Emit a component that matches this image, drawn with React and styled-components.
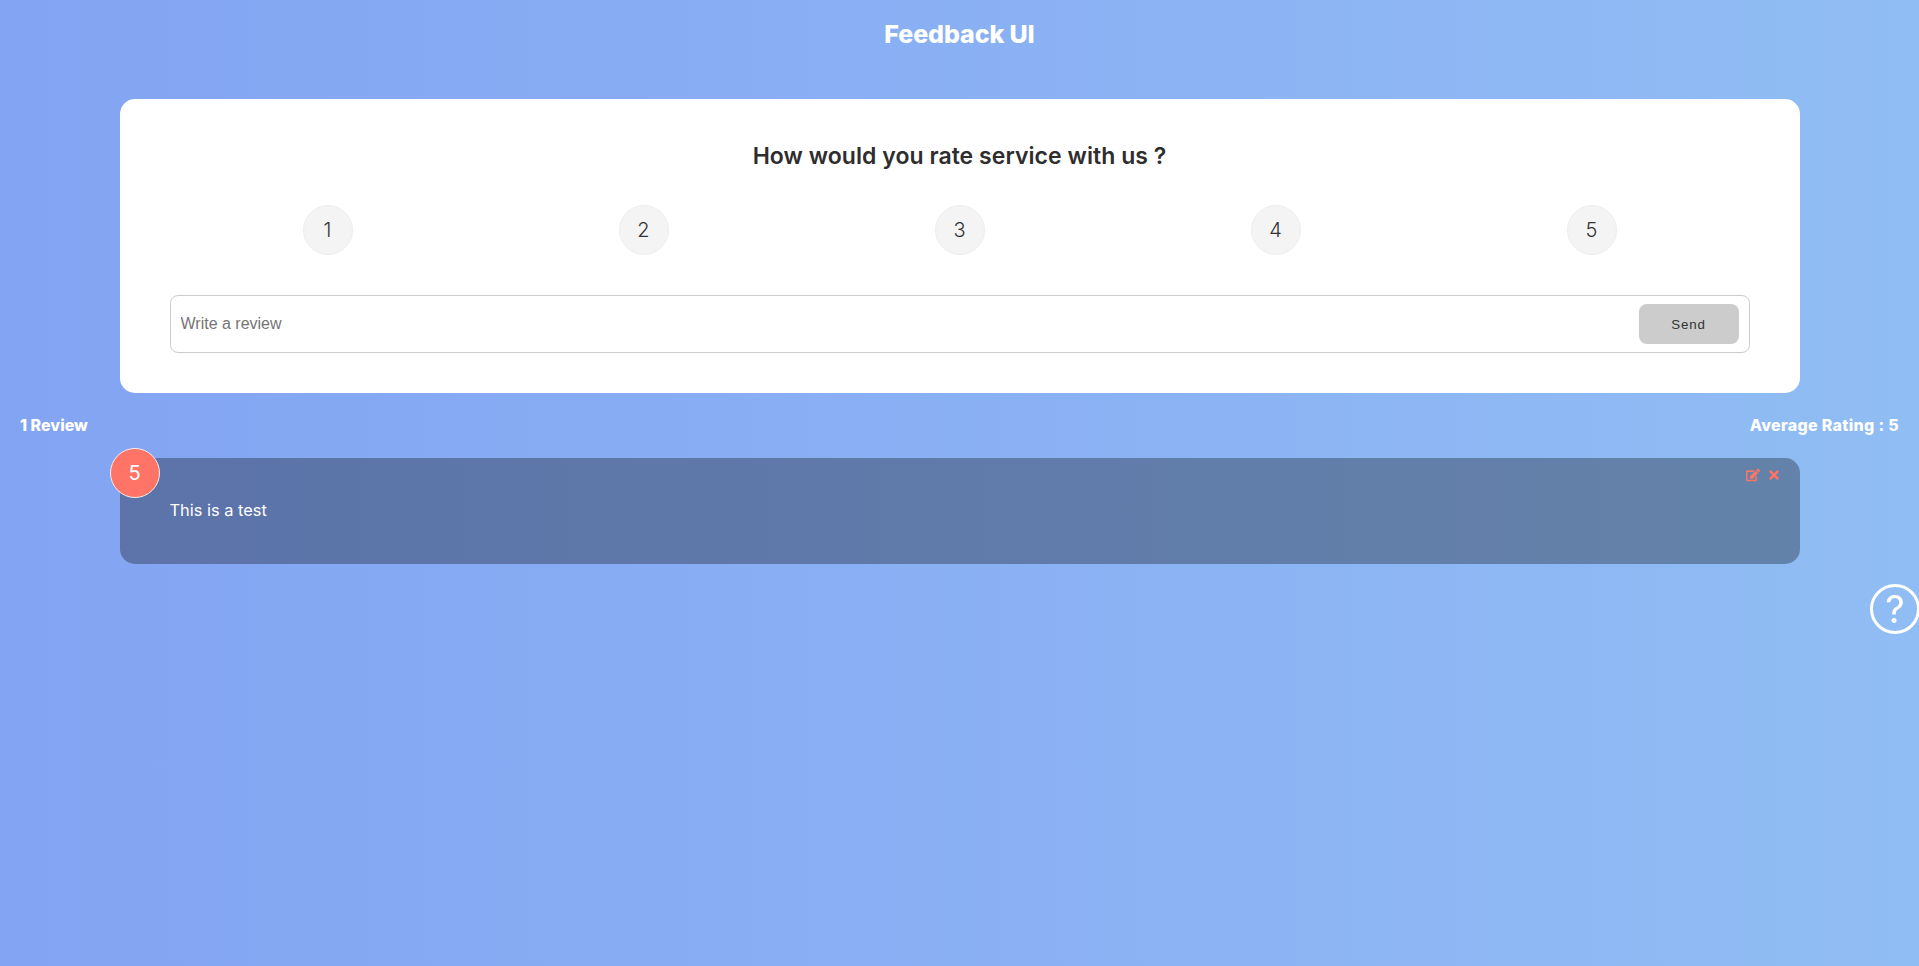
import React from "react";
import styled, { createGlobalStyle } from "styled-components";
import { FaEdit, FaTimes } from "react-icons/fa";

const Global = createGlobalStyle`
  * { box-sizing: border-box; }
  html, body { margin: 0; padding: 0; height: 100%; }
  body {
    font-family: Inter, "Liberation Sans", sans-serif;
    background: linear-gradient(90deg, #83a4f2 0%, #8ab0f4 50%, #90bdf3 100%);
    min-height: 966px;
  }
`;

const Page = styled.div`
  display: flex;
  flex-direction: column;
  min-height: 966px;
  overflow: hidden;
`;

const Header = styled.header`
  height: 99px;
  padding-top: 19px;
  text-align: center;
`;

const Title = styled.h1`
  margin: 0;
  color: #fff;
  font-size: 25px;
  line-height: 30px;
  font-weight: 800;
  letter-spacing: -0.1px;
`;

const Card = styled.section`
  width: 1680px;
  height: 294px;
  margin: 0 auto;
  padding: 43px 50px 0;
  background: #fff;
  border-radius: 15px;
`;

const Question = styled.h2`
  margin: 0;
  color: #2f2d2e;
  font-size: 23px;
  line-height: 28px;
  font-weight: 600;
  letter-spacing: 0.05px;
  text-align: center;
`;

const Ratings = styled.ul`
  display: flex;
  justify-content: space-around;
  list-style: none;
  margin: 35px 0 0;
  padding: 0;
`;

const RatingCircle = styled.li`
  display: flex;
  align-items: center;
  justify-content: center;
  width: 50px;
  height: 50px;
  border: 1px solid #eee;
  border-radius: 50%;
  background: #f4f4f4;
  color: #333;
  font-size: 20px;
  font-weight: 300;
`;

const InputGroup = styled.form`
  display: flex;
  align-items: center;
  height: 58px;
  margin-top: 40px;
  padding: 0 10px;
  border: 1px solid #ccc;
  border-radius: 8px;
`;

const ReviewInput = styled.input`
  flex: 1;
  border: 0;
  outline: 0;
  padding: 0;
  background: transparent;
  font-family: "Liberation Sans", Arial, sans-serif;
  font-size: 16px;
  &::placeholder { color: #757575; }
`;

const SendButton = styled.button`
  width: 100px;
  height: 40px;
  border: 0;
  border-radius: 8px;
  background: #ccc;
  color: #333;
  font-family: "Liberation Sans", Arial, sans-serif;
  font-size: 13.33px;
  letter-spacing: 0.9px;
`;

const Stats = styled.div`
  display: flex;
  justify-content: space-between;
  height: 65px;
  padding: 21px 20px 0 20px;
  color: #fff;
  font-size: 16px;
  line-height: 22px;
  font-weight: 800;
`;

const StatText = styled.span`
  letter-spacing: ${(p) => p.$spacing || "0"};
`;

const ReviewCard = styled.article`
  position: relative;
  width: 1680px;
  height: 106px;
  margin: 0 auto;
  padding: 40px 50px 0;
  background: rgba(0, 0, 0, 0.3);
  border-radius: 15px;
  color: #fff;
  font-size: 16.4px;
  line-height: 24px;
`;

const Badge = styled.div`
  position: absolute;
  top: -10px;
  left: -10px;
  display: flex;
  align-items: center;
  justify-content: center;
  width: 50px;
  height: 50px;
  border: 1px solid #eee;
  border-radius: 50%;
  background: #ff7466;
  color: #fff;
  font-size: 20px;
`;

const Actions = styled.div`
  position: absolute;
  top: 10px;
  right: 19px;
  display: flex;
  align-items: center;
  gap: 7px;
  color: #ff7466;
  font-size: 14px;
  line-height: 0;
`;

const HelpLink = styled.a`
  position: fixed;
  top: 584px;
  right: -1px;
  display: flex;
  align-items: center;
  justify-content: center;
  width: 50px;
  height: 50px;
  border: 3px solid #fff;
  border-radius: 50%;
  color: #fff;
  font-size: 38px;
  font-weight: 400;
`;

export default function App() {
  return (
    <>
      <Global />
      <Page>
        <Header><Title>Feedback UI</Title></Header>
        <Card>
          <Question>How would you rate service with us ?</Question>
          <Ratings>
            {[1, 2, 3, 4, 5].map((n) => <RatingCircle key={n}>{n}</RatingCircle>)}
          </Ratings>
          <InputGroup>
            <ReviewInput placeholder="Write a review" />
            <SendButton type="button">Send</SendButton>
          </InputGroup>
        </Card>
        <Stats>
          <StatText>1 Review</StatText>
          <StatText $spacing="0.32px">Average Rating : 5</StatText>
        </Stats>
        <ReviewCard>
          <Badge>5</Badge>
          <Actions><FaEdit /><FaTimes /></Actions>
          This is a test
        </ReviewCard>
        <HelpLink>?</HelpLink>
      </Page>
    </>
  );
}
